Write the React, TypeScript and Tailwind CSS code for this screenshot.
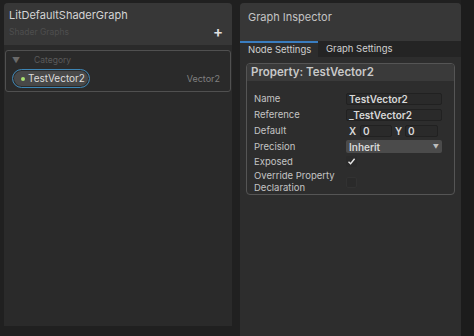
import React from "react";

function Field({ children, className = "" }: { children?: React.ReactNode; className?: string }) {
  return (
    <div className={`h-[12px] rounded-[2px] bg-[#2a2a2a] border border-[#212121] flex items-center px-[2px] text-[10px] font-semibold text-[#d8d8d8] leading-none ${className}`}>
      {children}
    </div>
  );
}

export default function App() {
  return (
    <div
      className="w-[474px] h-[336px] bg-[#202020] flex overflow-hidden"
      style={{ fontFamily: "Inter, 'Noto Sans', sans-serif" }}
    >
      {/* Left panel */}
      <div className="ml-[4px] mt-[3px] w-[228px] h-[323px] rounded-t-[4px] bg-[#2a2a2a] flex flex-col">
        <div className="h-[42px] bg-[#373737] rounded-t-[4px] pl-[5px] pt-[5px] relative">
          <div className="text-[11px] text-[#d4d4d4] leading-[15px]">LitDefaultShaderGraph</div>
          <div className="text-[8.5px] text-[#4e4e4e] leading-[12px] mt-[3px]">Shader Graphs</div>
          <div className="absolute right-[9px] top-[21px] text-[15px] text-[#e0e0e0] font-semibold leading-none">+</div>
        </div>
        <div className="mx-[1px] mt-[5px] h-[42px] rounded-[3px] border border-[#505050] bg-[#2a2a2a] flex flex-col">
          <div className="h-[16px] flex items-center pl-[6px] pt-[2px]">
            <span className="text-[#6a6a6a] text-[8px] leading-none">▼</span>
            <span className="ml-[14px] text-[8.5px] text-[#5a5a5a]">Category</span>
          </div>
          <div className="flex items-center justify-between pr-[10px] mt-[2px]">
            <div className="ml-[6px] h-[19px] w-[78px] rounded-full border border-[#3d85b4] bg-[#484848] flex items-center pl-[8px] shadow-[inset_0_0_0_1px_#2a2a2a]">
              <span className="w-[4px] h-[4px] rounded-full bg-[#a8e070]" />
              <span className="ml-[3px] text-[10px] text-[#dcdcdc]">TestVector2</span>
            </div>
            <span className="text-[9px] text-[#808080]">Vector2</span>
          </div>
        </div>
      </div>

      {/* Right panel */}
      <div className="ml-[8px] mt-[3px] w-[221px] h-[333px] rounded-t-[4px] bg-[#2d2d2d] flex flex-col">
        <div className="h-[38px] bg-[#373737] rounded-t-[4px] px-[8px] pt-[6px]">
          <div className="text-[11px] text-[#c4c4c4] leading-[16px]">Graph Inspector</div>
        </div>
        <div className="h-[16px] bg-[#242424] flex text-[9.5px] text-[#d0d0d0]">
          <div className="w-[78px] border-t-2 border-[#3a7dc0] bg-[#2d2d2d] pl-[8px] leading-[14px]">Node Settings</div>
          <div className="pl-[8px] leading-[16px]">Graph Settings</div>
        </div>
        <div className="mx-[6px] mt-[6px] h-[132px] rounded-[4px] border border-[#555555] flex flex-col">
          <div className="h-[21px] bg-[#3a3a3a] rounded-t-[3px] pl-[4px] flex items-center text-[11.5px] font-semibold text-[#c8c8c8]">
            Property: TestVector2
          </div>
          <div className="pl-[7px] pt-[10px] text-[9.5px] text-[#c4c4c4] leading-none flex flex-col">
            <div className="flex items-center h-[15px]">
              <span className="w-[92px]">Name</span>
              <Field className="w-[96px]">TestVector2</Field>
            </div>
            <div className="flex items-center h-[15px] mt-[1px]">
              <span className="w-[92px]">Reference</span>
              <Field className="w-[96px]">_TestVector2</Field>
            </div>
            <div className="flex items-center h-[15px] mt-[1px]">
              <span className="w-[92px]">Default</span>
              <span className="ml-[3px] w-[11px] text-[10px] font-semibold text-[#d8d8d8]">X</span>
              <Field className="w-[32px]">0</Field>
              <span className="ml-[3px] w-[10px] text-[10px] font-semibold text-[#d8d8d8]">Y</span>
              <Field className="w-[33px]">0</Field>
            </div>
            <div className="flex items-center h-[15px] mt-[1px]">
              <span className="w-[92px]">Precision</span>
              <div className="w-[96px] h-[13px] rounded-[2px] bg-[#4b4b4b] flex items-center justify-between px-[3px] text-[10px] font-semibold text-[#d8d8d8]">
                <span>Inherit</span>
                <span className="text-[6px] text-[#bdbdbd]">▼</span>
              </div>
            </div>
            <div className="flex items-center h-[15px]">
              <span className="w-[92px]">Exposed</span>
              <div className="w-[11px] h-[11px] rounded-[2px] bg-[#2a2a2a] flex items-center justify-center">
                <svg width="9" height="9" viewBox="0 0 9 9">
                  <path d="M1.5 4.8 L3.6 6.8 L7.6 1.8" stroke="#e6e6e6" strokeWidth="1.4" fill="none" />
                </svg>
              </div>
            </div>
            <div className="flex items-center mt-[1px]">
              <span className="w-[92px] leading-[12px]">Override Property<br />Declaration</span>
              <div className="w-[11px] h-[11px] rounded-[2px] bg-[#2a2a2a] border border-[#323232]" />
            </div>
          </div>
        </div>
      </div>
      <div className="w-[13px] h-full bg-[#1c1c1c] ml-0" />
    </div>
  );
}
